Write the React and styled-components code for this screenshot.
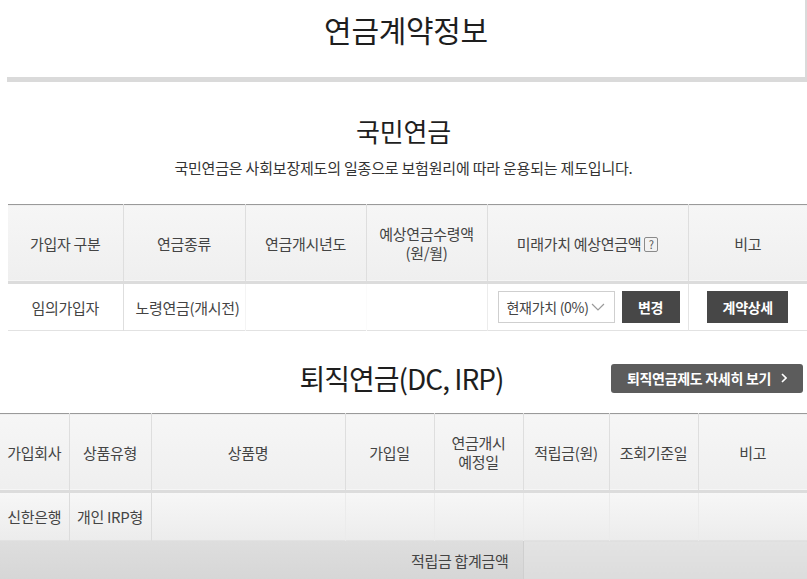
import React from "react";
import styled, { createGlobalStyle } from "styled-components";

const Global = createGlobalStyle`
  html, body { margin: 0; padding: 0; background: #fff; }
  body { font-family: "Noto Sans CJK KR", "Noto Sans", sans-serif; color: #333; overflow: hidden; }
  * { box-sizing: border-box; }
`;

const Page = styled.div`
  width: 807px;
  height: 579px;
  overflow: hidden;
`;

const TopBox = styled.header`
  margin-left: 7px;
  height: 82px;
  border-right: 2px solid #dadada;
  border-bottom: 5px solid #dadada;
  display: flex;
  justify-content: center;
  align-items: flex-start;
  padding-top: 8px;
`;

const PageTitle = styled.h1`
  margin: 0;
  font-size: 30px;
  font-weight: 400;
  line-height: 42px;
  color: #1e1e1e;
  letter-spacing: -0.3px;
`;

const Section = styled.section`
  display: flex;
  flex-direction: column;
  align-items: center;
  padding-top: ${(p) => p.$top}px;
`;

const SectionTitle = styled.h2`
  margin: 0;
  font-size: ${(p) => p.$size || 26}px;
  font-weight: 400;
  line-height: 36px;
  color: #1e1e1e;
  letter-spacing: ${(p) => (p.$size ? -1 : -0.2)}px;
`;

const Desc = styled.p`
  margin: 9px 0 0;
  font-size: 15px;
  line-height: 20px;
  color: #333;
  letter-spacing: -0.2px;
`;

const Table = styled.table`
  border-collapse: collapse;
  table-layout: fixed;
  width: ${(p) => p.$width}px;
  margin-left: ${(p) => p.$left || 0}px;
  margin-top: ${(p) => p.$top || 0}px;
  font-size: 15px;
  color: #444;
`;

const HeadRow = styled.tr`
  height: 78px;
  background: linear-gradient(180deg, #f6f6f6 0%, #efefef 100%);
  border-top: 1px solid #9a9a9a;
  border-bottom: 3px solid #dcdcdc;
`;

const Th = styled.th`
  font-weight: 400;
  text-align: center;
  line-height: 19px;
  padding: 0 4px;
  border-left: 1px solid #dedede;
  &:first-child { border-left: none; }
  letter-spacing: -0.3px;
`;

const Row = styled.tr`
  height: ${(p) => p.$h || 48}px;
  border-bottom: 1px solid #e2e2e2;
  background: ${(p) => p.$bg || "#fff"};
`;

const Td = styled.td`
  text-align: ${(p) => p.$align || "center"};
  padding: ${(p) => (p.$align === "left" ? "0 0 0 12px" : p.$align === "right" ? "0 14px 0 0" : "0")};
  border-left: 1px solid ${(p) => p.$line || "#ececec"};
  &:first-child { border-left: none; }
  background: ${(p) => p.$bg || "transparent"};
  letter-spacing: -0.3px;
  white-space: nowrap;
  overflow: visible;
`;

const Controls = styled.div`
  display: flex;
  gap: 7px;
  justify-content: center;
  padding-left: 2px;
`;

const Select = styled.div`
  width: 117px;
  height: 32px;
  border: 1px solid #cfcfcf;
  background: #fff;
  display: flex;
  align-items: center;
  justify-content: space-between;
  padding: 0 9px 0 8px;
  font-size: 14px;
  color: #444;
`;

const DarkButton = styled.button`
  width: ${(p) => p.$w}px;
  height: 32px;
  border: none;
  background: #474747;
  color: #fff;
  font-family: inherit;
  font-size: 14px;
  font-weight: 700;
  letter-spacing: -0.3px;
  padding: 0;
`;

const Help = styled.span`
  display: inline-flex;
  width: 14px;
  height: 15px;
  border: 1px solid #8a8a8a;
  border-radius: 2px;
  font-size: 11px;
  line-height: 1;
  align-items: center;
  justify-content: center;
  margin-left: 3px;
  vertical-align: 1px;
  color: #555;
`;

const TitleBar = styled.div`
  display: grid;
  grid-template-columns: 1fr auto 1fr;
  align-items: center;
  margin-top: 29px;
  padding-right: 4px;
  height: 32px;
`;

const LinkButton = styled.button`
  justify-self: end;
  width: 192px;
  height: 29px;
  border: none;
  border-radius: 3px;
  background: #5c5c5c;
  color: #fff;
  font-family: inherit;
  font-size: 14px;
  font-weight: 700;
  letter-spacing: -0.3px;
  display: flex;
  align-items: center;
  justify-content: center;
  gap: 10px;
  padding: 0;
`;

const Chevron = ({ size = 14 }) => (
  <svg width={size} height={size * 0.57} viewBox="0 0 14 8" fill="none">
    <path d="M1 1l6 6 6-6" stroke="#9a9a9a" strokeWidth="1.2" />
  </svg>
);

const RightArrow = () => (
  <svg width="6" height="10" viewBox="0 0 6 10" fill="none">
    <path d="M1 1l4 4-4 4" stroke="#fff" strokeWidth="1.6" />
  </svg>
);

export default function App() {
  return (
    <Page>
      <Global />
      <TopBox>
        <PageTitle>연금계약정보</PageTitle>
      </TopBox>

      <Section $top={31}>
        <SectionTitle>국민연금</SectionTitle>
        <Desc>국민연금은 사회보장제도의 일종으로 보험원리에 따라 운용되는 제도입니다.</Desc>
      </Section>

      <Table $width={799} $left={8} $top={26}>
        <colgroup>
          <col style={{ width: 115 }} />
          <col style={{ width: 122 }} />
          <col style={{ width: 121 }} />
          <col style={{ width: 121 }} />
          <col style={{ width: 201 }} />
          <col style={{ width: 119 }} />
        </colgroup>
        <thead>
          <HeadRow>
            <Th>가입자 구분</Th>
            <Th>연금종류</Th>
            <Th>연금개시년도</Th>
            <Th>
              예상연금수령액
              <br />
              (원/월)
            </Th>
            <Th>
              미래가치 예상연금액<Help>?</Help>
            </Th>
            <Th>비고</Th>
          </HeadRow>
        </thead>
        <tbody>
          <Row $h={48}>
            <Td>임의가입자</Td>
            <Td $align="left" $line="#dedede">노령연금(개시전)</Td>
            <Td $line="#f4f4f4" />
            <Td $line="#fbfbfb" />
            <Td $line="#ececec">
              <Controls>
                <Select>
                  <span>현재가치 (0%)</span>
                  <Chevron />
                </Select>
                <DarkButton $w={58}>변경</DarkButton>
              </Controls>
            </Td>
            <Td $line="#e4e4e4">
              <DarkButton $w={81}>계약상세</DarkButton>
            </Td>
          </Row>
        </tbody>
      </Table>

      <TitleBar>
        <span />
        <SectionTitle $size={28}>퇴직연금(DC, IRP)</SectionTitle>
        <LinkButton>
          퇴직연금제도 자세히 보기
          <RightArrow />
        </LinkButton>
      </TitleBar>

      <Table $width={807} $top={21}>
        <colgroup>
          <col style={{ width: 69 }} />
          <col style={{ width: 82 }} />
          <col style={{ width: 194 }} />
          <col style={{ width: 89 }} />
          <col style={{ width: 89 }} />
          <col style={{ width: 86 }} />
          <col style={{ width: 89 }} />
          <col style={{ width: 109 }} />
        </colgroup>
        <thead>
          <HeadRow>
            <Th>가입회사</Th>
            <Th>상품유형</Th>
            <Th>상품명</Th>
            <Th>가입일</Th>
            <Th>
              연금개시
              <br />
              예정일
            </Th>
            <Th>적립금(원)</Th>
            <Th>조회기준일</Th>
            <Th>비고</Th>
          </HeadRow>
        </thead>
        <tbody>
          <Row $h={49} $bg="linear-gradient(180deg, #f7f7f7 0%, #ececec 100%)">
            <Td $line="#e4e4e4">신한은행</Td>
            <Td $line="#dcdcdc">개인 IRP형</Td>
            <Td $line="#dcdcdc" />
            <Td $line="#ebebeb" />
            <Td $line="#ebebeb" />
            <Td $line="#ebebeb" />
            <Td $line="#ebebeb" />
            <Td $line="#ebebeb" />
          </Row>
          <Row $h={40} $bg="linear-gradient(180deg, #dedede 0%, #d6d6d6 100%)">
            <Td colSpan={5} $align="right">적립금 합계금액</Td>
            <Td colSpan={3} $line="#cfcfcf" $bg="linear-gradient(180deg, #e3e3e3 0%, #dcdcdc 100%)" />
          </Row>
        </tbody>
      </Table>
    </Page>
  );
}
